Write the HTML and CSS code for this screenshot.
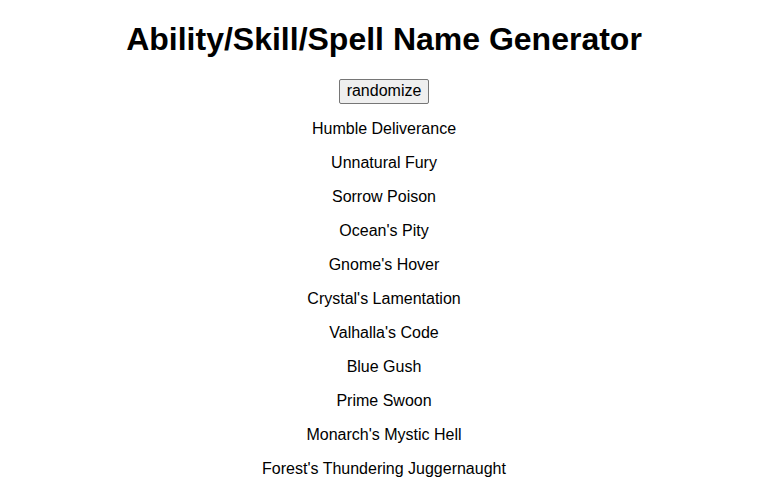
FILE: index.html
```html
<!DOCTYPE html>
<html lang="en">

<head>
    <meta charset="UTF-8">
    <meta name="viewport" content="width=device-width, initial-scale=1.0">
    <title>Ability/Skill/Spell Name Generator</title>
    <link rel="stylesheet" href="styles.css">
</head>

<body>
    <div class="app">
        <h1>Ability/Skill/Spell Name Generator</h1>
        <div class="controls">
            <button id="randomize">randomize</button>
        </div>
        <div class="names">
            <p>Humble Deliverance</p>
            <p>Unnatural Fury</p>
            <p>Sorrow Poison</p>
            <p>Ocean's Pity</p>
            <p>Gnome's Hover</p>
            <p>Crystal's Lamentation</p>
            <p>Valhalla's Code</p>
            <p>Blue Gush</p>
            <p>Prime Swoon</p>
            <p>Monarch's Mystic Hell</p>
            <p>Forest's Thundering Juggernaught</p>
        </div>
    </div>
</body>

</html>
```

FILE: styles.css
```css
body {
    margin: 0;
    font-family: "Liberation Sans", Arial, sans-serif;
    color: #000;
    background: #fff;
}

.app {
    text-align: center;
}

h1 {
    font-size: 32px;
    margin: 21px 0;
}

.controls {
    margin: 0;
}

#randomize {
    font-family: "Liberation Sans", Arial, sans-serif;
    font-size: 16px;
    color: #000;
    background: #efefef;
    border: 1px solid #767676;
    border-radius: 2px;
    padding: 2px 7px 3px;
}

.names p {
    margin: 16px 0;
    font-size: 16px;
}
```
